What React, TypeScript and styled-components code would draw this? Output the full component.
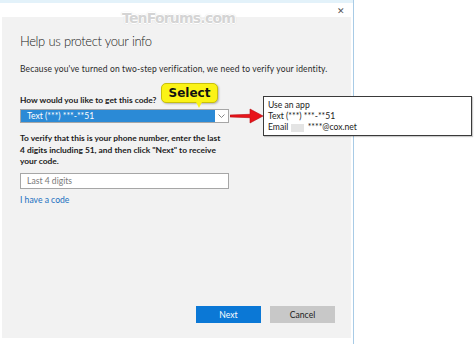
import styled, { createGlobalStyle } from "styled-components";

const GlobalStyle = createGlobalStyle`
  html, body {
    margin: 0;
    padding: 0;
    background: #ffffff;
  }
  body {
    font-family: Lato, "Open Sans", sans-serif;
    color: #1b1b1b;
  }
`;

const App = () => {
  return (
    <>
      <GlobalStyle />
      <Page>
        <Window>
          <TopBand />
          <TitleBar>
            <Watermark>TenForums.com</Watermark>
            <Close>✕</Close>
          </TitleBar>
          <Content>
            <Title>Help us protect your info</Title>
            <Intro>Because you've turned on two-step verification, we need to verify your identity.</Intro>
            <Label>How would you like to get this code?</Label>
            <SelectRow>
              <Dropdown>
                <DropValue>Text (***) ***-**51</DropValue>
                <Chevron>
                  <svg width="7" height="4" viewBox="0 0 7 4">
                    <path d="M0.5 0.5 L3.5 3.5 L6.5 0.5" fill="none" stroke="#7a7a7a" strokeWidth="0.9" />
                  </svg>
                </Chevron>
              </Dropdown>
              <Callout>
                Select
                <CalloutTail />
              </Callout>
              <Arrow>
                <svg width="34" height="16" viewBox="0 0 34 16">
                  <path d="M0 7 L20 6.3 L20 1 L33 8 L20 15 L20 9.7 L0 9 Z" fill="#e8141a" stroke="#b80a0f" strokeWidth="0.6" />
                </svg>
              </Arrow>
              <Options>
                <Option>Use an app</Option>
                <Option>Text (***) ***-**51</Option>
                <Option>
                  Email <Blur /> ****@cox.net
                </Option>
              </Options>
            </SelectRow>
            <Help>
              To verify that this is your phone number, enter the last
              <br />
              4 digits including 51, and then click "Next" to receive
              <br />
              your code.
            </Help>
            <Input placeholder="Last 4 digits" />
            <Link>I have a code</Link>
            <Spacer />
            <Buttons>
              <Button $primary>Next</Button>
              <Button>Cancel</Button>
            </Buttons>
          </Content>
        </Window>
      </Page>
    </>
  );
};

export default App;

const Page = styled.div`
  width: 474px;
  height: 344px;
  display: flex;
  overflow: hidden;
  background: #ffffff;
`;

const Window = styled.div`
  width: 353px;
  height: 344px;
  display: flex;
  flex-direction: column;
  border-right: 1px solid #a8cbe6;
  background: #ffffff;
`;

const TopBand = styled.div`
  height: 3px;
  background: #e3f2fa;
`;

const TitleBar = styled.div`
  position: relative;
  height: 14px;
  display: flex;
  justify-content: flex-end;
  align-items: center;
  padding-right: 8px;
`;

const Watermark = styled.div`
  position: absolute;
  left: 122px;
  top: 8px;
  font-family: "DejaVu Sans", sans-serif;
  font-weight: bold;
  font-size: 14px;
  line-height: 1;
  letter-spacing: -0.8px;
  color: #d4d4d4;
  text-shadow:
    1px 0 0 #ffffff,
    -1px 0 0 #ffffff,
    0 1px 0 #ffffff,
    0 -1px 0 #ffffff,
    0 0 2px #a0a0a0;
  z-index: 2;
`;

const Close = styled.span`
  font-size: 9px;
  color: #555;
  line-height: 1;
`;

const Content = styled.div`
  flex: 1;
  margin: 0 2px 6px 2px;
  background: #f2f2f2;
  display: flex;
  flex-direction: column;
  padding: 11px 0 15px 18px;
`;

const Title = styled.div`
  font-size: 13px;
  font-weight: 300;
  letter-spacing: -0.4px;
  word-spacing: 0.5px;
  color: #222;
  line-height: 26px;
`;

const Intro = styled.div`
  margin-top: 9px;
  font-size: 8.5px;
  letter-spacing: 0.15px;
  line-height: 12px;
  color: #2a2a2a;
`;

const Label = styled.div`
  margin-top: 19px;
  font-size: 8.4px;
  font-weight: 700;
  line-height: 12px;
`;

const SelectRow = styled.div`
  position: relative;
  margin-top: 3px;
  height: 14px;
`;

const Dropdown = styled.div`
  width: 209px;
  height: 14px;
  display: flex;
  border: 1px solid #a6a6a6;
  box-sizing: border-box;
`;

const DropValue = styled.div`
  flex: 1;
  background: #2b8ad6;
  color: #fff;
  font-size: 8.6px;
  line-height: 12px;
  padding-left: 6px;
`;

const Chevron = styled.div`
  width: 13px;
  background: #fff;
  display: flex;
  align-items: center;
  justify-content: center;
`;

const Callout = styled.div`
  position: absolute;
  left: 141px;
  top: -26px;
  width: 57px;
  height: 20px;
  border-radius: 5px;
  background: #fbf316;
  border: 1px solid #c9c00a;
  box-shadow: 1px 1px 2px rgba(0, 0, 0, 0.25);
  box-sizing: border-box;
  display: flex;
  align-items: center;
  justify-content: center;
  font-family: "DejaVu Sans", sans-serif;
  font-weight: bold;
  font-size: 12px;
  color: #111;
`;

const CalloutTail = styled.div`
  position: absolute;
  left: 34px;
  bottom: -6px;
  width: 0;
  height: 0;
  border-left: 3px solid transparent;
  border-right: 3px solid transparent;
  border-top: 6px solid #fbf316;
`;

const Arrow = styled.div`
  position: absolute;
  left: 210px;
  top: -1px;
  line-height: 0;
`;

const Options = styled.div`
  position: absolute;
  left: 243px;
  top: -13px;
  width: 209px;
  height: 40px;
  box-sizing: border-box;
  border: 1px solid #3a3a3a;
  background: #fff;
  box-shadow: 1px 1px 1px rgba(0, 0, 0, 0.2);
  padding: 3px 0 0 4px;
  display: flex;
  flex-direction: column;
  z-index: 3;
`;

const Option = styled.div`
  font-size: 8.6px;
  line-height: 11px;
  color: #1b1b1b;
  display: flex;
  align-items: center;
  white-space: pre;
`;

const Blur = styled.span`
  display: inline-block;
  width: 13px;
  height: 8px;
  background: #e4e4e4;
  margin: 0 1px;
`;

const Help = styled.div`
  margin-top: 10px;
  font-size: 8.4px;
  font-weight: 700;
  line-height: 11.5px;
  color: #1b1b1b;
`;

const Input = styled.input`
  margin-top: 5px;
  width: 209px;
  height: 16px;
  box-sizing: border-box;
  border: 1px solid #a6a6a6;
  background: #fff;
  padding: 0 6px;
  font-family: Lato, sans-serif;
  font-size: 8.6px;
  outline: none;
  &::placeholder {
    color: #7a7a7a;
  }
`;

const Link = styled.div`
  margin-top: 5px;
  font-size: 8.6px;
  line-height: 12px;
  color: #1a6fc0;
`;

const Spacer = styled.div`
  flex: 1;
`;

const Buttons = styled.div`
  display: flex;
  justify-content: flex-end;
  gap: 9px;
  padding-right: 16px;
`;

const Button = styled.div<{ $primary?: boolean }>`
  width: 65px;
  height: 17px;
  display: flex;
  align-items: center;
  justify-content: center;
  font-size: 8.6px;
  background: ${(p) => (p.$primary ? "#0b78d6" : "#c8c8c8")};
  color: ${(p) => (p.$primary ? "#ffffff" : "#1b1b1b")};
`;
